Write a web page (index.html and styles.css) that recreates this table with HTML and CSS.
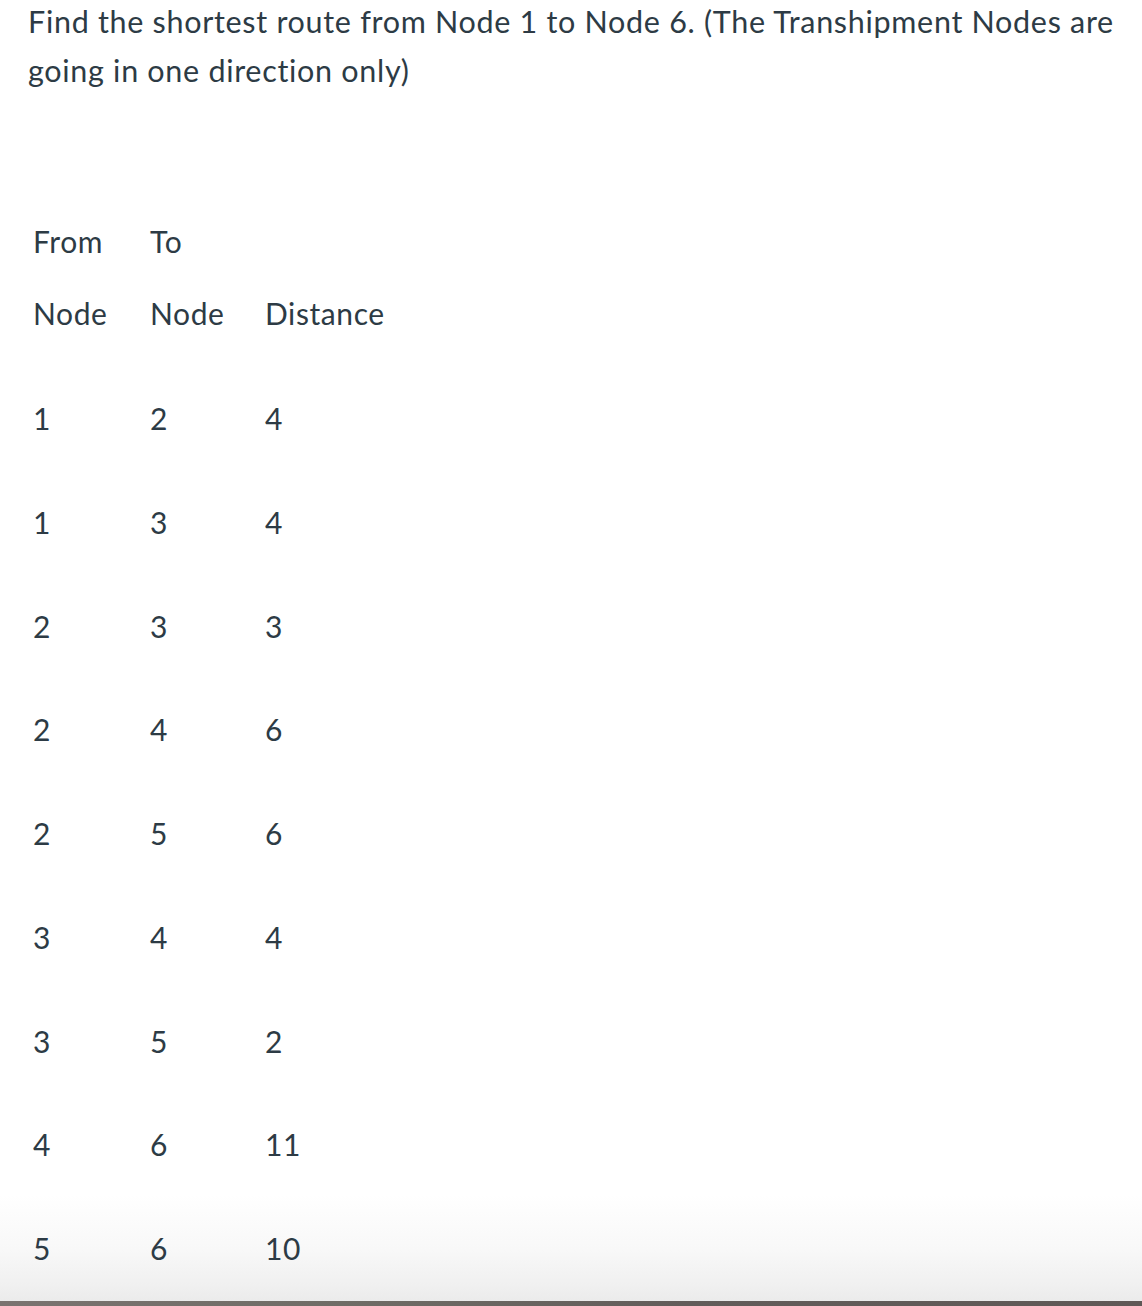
FILE: index.html
```html
<!DOCTYPE html>
<html lang="en">
<head>
<meta charset="utf-8">
<title>Shortest route</title>
<link rel="stylesheet" href="styles.css">
</head>
<body>
<main class="page">
  <p class="question">Find the shortest route from Node 1 to Node 6. (The Transhipment Nodes are going in one direction only)</p>
  <div class="table">
    <div class="row head"><span>From</span><span>To</span><span></span></div>
    <div class="row head"><span>Node</span><span>Node</span><span>Distance</span></div>
    <div class="body">
      <div class="row"><span>1</span><span>2</span><span>4</span></div>
      <div class="row"><span>1</span><span>3</span><span>4</span></div>
      <div class="row"><span>2</span><span>3</span><span>3</span></div>
      <div class="row"><span>2</span><span>4</span><span>6</span></div>
      <div class="row"><span>2</span><span>5</span><span>6</span></div>
      <div class="row"><span>3</span><span>4</span><span>4</span></div>
      <div class="row"><span>3</span><span>5</span><span>2</span></div>
      <div class="row"><span>4</span><span>6</span><span>11</span></div>
      <div class="row"><span>5</span><span>6</span><span>10</span></div>
    </div>
  </div>
</main>
<div class="bar"></div>
</body>
</html>
```

FILE: styles.css
```css
html, body {
  margin: 0;
  padding: 0;
}
body {
  font-family: Lato, "Open Sans", sans-serif;
  color: #2d3b45;
  width: 1142px;
  height: 1306px;
  overflow: hidden;
  position: relative;
  background: linear-gradient(to bottom, #ffffff 0px, #ffffff 1195px, #f8f8f8 1250px, #f0f0f0 1285px, #ebebeb 1301px);
}
.page {
  padding: 0 20px 0 28px;
}
.question {
  margin: -3px 0 0 0;
  font-size: 30.5px;
  line-height: 48.6px;
  letter-spacing: 0.7px;
  width: 1094px;
}
.table {
  margin-top: 111px;
  padding-left: 5px;
  font-size: 30px;
  letter-spacing: 0.6px;
}
.row {
  display: grid;
  grid-template-columns: 117px 115px auto;
}
.row.head {
  height: 72px;
  line-height: 72px;
}
.body {
  margin-top: 18px;
}
.body .row {
  height: 103.75px;
  line-height: 103.75px;
}
.bar {
  position: absolute;
  left: 0;
  right: 0;
  bottom: 0;
  height: 5px;
  background: linear-gradient(to right, #7a7370 0%, #6f6c66 30%, #625c5a 60%, #5f5856 100%);
}
```
